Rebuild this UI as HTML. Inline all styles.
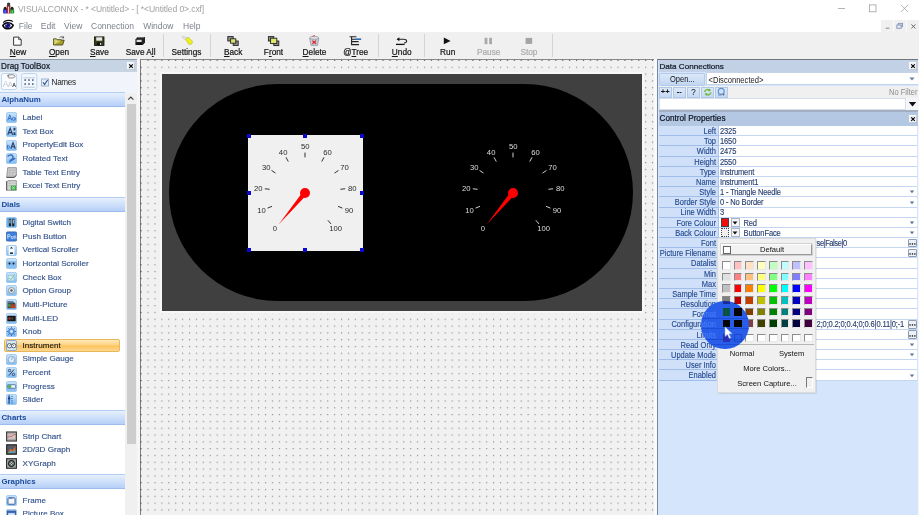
<!DOCTYPE html>
<html><head><meta charset="utf-8"><title>VISUALCONNX</title>
<style>
*{box-sizing:border-box;margin:0;padding:0}
html{width:919px;height:515px;overflow:hidden;background:#fff}
body{width:919px;height:515px;overflow:visible;background:#fff;filter:blur(0.4px);will-change:transform}
body{position:relative;font-family:"Liberation Sans",sans-serif;font-size:8.3px;color:#222;-webkit-font-smoothing:antialiased}
.a{position:absolute;white-space:nowrap}
.t{position:absolute;white-space:nowrap;line-height:10px;height:10px}
.tb{position:absolute;top:47.5px;height:10px;line-height:10px;font-size:8.25px;color:#151515;-webkit-text-stroke-width:0.2px;text-align:center;white-space:nowrap;transform:translateX(-50%)}
.tb u{text-decoration-thickness:0.6px;text-underline-offset:1px}
.sep{position:absolute;top:34px;height:23px;width:1px;background:#d4d4d4}
.hdr{position:absolute;left:-8px;width:133px;height:15px;background:linear-gradient(#e6f0fd,#b7d0f8);color:#1a4a9c;font-weight:bold;font-size:7.9px;line-height:14.2px;padding-left:9.4px;border-bottom:1px solid #9dbcee;border-top:1px solid #b4cdf3}
.it{-webkit-text-stroke-width:0.15px;position:absolute;left:22.5px;height:12px;line-height:12px;font-size:8.1px;color:#34538c;white-space:nowrap}
.ic{position:absolute;left:6px;width:11px;height:11px}
.pl{-webkit-text-stroke-width:0.12px;position:absolute;left:659px;width:58px;height:10.18px;line-height:11.6px;text-align:right;font-size:7.5px;transform:scaleY(1.1);transform-origin:100% 60%;color:#24488e;white-space:nowrap;padding-right:1px}
.pv{-webkit-text-stroke-width:0.12px;position:absolute;left:720.5px;height:10.18px;line-height:11.4px;font-size:7.55px;transform:scaleY(1.18);transform-origin:0 60%;color:#2a4070;white-space:nowrap;letter-spacing:-0.15px}
</style></head><body>
<svg width="0" height="0" style="position:absolute"><defs><linearGradient id="gb" x1="0" y1="0" x2="0" y2="1"><stop offset="0" stop-color="#cde5fb"/><stop offset="1" stop-color="#7fbcf0"/></linearGradient></defs></svg>

<div class="a" style="left:-8px;top:-8px;width:940px;height:39.5px;background:#fff"></div>
<svg class="a" style="left:2px;top:2px" width="14" height="13" viewBox="2 2 14 13">
<rect x="6.9" y="5.2" width="3.3" height="8.3" fill="#d42020"/><rect x="8.1" y="5.6" width="0.9" height="7.6" fill="#f4e8e0"/>
<circle cx="8.6" cy="4.1" r="1.7" fill="#3a3a3a"/><path d="M6.6 6.4C6.8 5 10.4 5 10.6 6.4Z" fill="#333"/>
<path d="M3.4 10C3.4 5.6 7 5.6 7 10V10.4H3.4Z" fill="#1c1c1c"/><rect x="3.1" y="9.6" width="4" height="3.9" rx="0.8" fill="#2330e0"/><rect x="4.7" y="10.4" width="0.8" height="2.4" fill="#9aa4ff"/>
<path d="M10.2 10C10.2 5.6 13.8 5.6 13.8 10V10.4H10.2Z" fill="#1c1c1c"/><rect x="10.2" y="9.6" width="4" height="3.9" rx="0.8" fill="#1f9a34"/><rect x="11.8" y="10.4" width="0.8" height="2.4" fill="#9fe0a8"/>
</svg>
<div class="t" style="left:18px;top:3.6px;font-size:8.6px;color:#a2a2a2;letter-spacing:-0.12px">VISUALCONNX - * &lt;Untitled&gt; - [ *&lt;Untitled 0&gt;.cxf]</div>
<svg class="a" style="left:830px;top:0" width="89" height="17" viewBox="0 0 89 17" fill="none" stroke="#a0a0a0" stroke-width="0.8">
<path d="M8 8.5H15"/><rect x="39.4" y="4.9" width="6.6" height="6.9"/><path d="M71 4.9L78 11.9M78 4.9L71 11.9"/></svg>
<svg class="a" style="left:2px;top:19px" width="13" height="12" viewBox="2 19 13 12">
<path d="M3.2 22.6C5 20 10.4 19.6 13 21.6" stroke="#111" stroke-width="1.1" fill="none"/>
<path d="M2.8 25.6C4.4 22.2 10.6 21.6 13.2 25.2C11.4 29.6 5 30.2 2.8 25.6Z" fill="#fff" stroke="#0a0a0a" stroke-width="1.5"/>
<circle cx="7.8" cy="25.6" r="2.7" fill="#1a1a96"/><circle cx="7.8" cy="25.6" r="1.1" fill="#05052a"/>
<path d="M6 24.2L7 25.2M8.8 26.6L9.6 27.2" stroke="#dfe4ff" stroke-width="0.8"/>
</svg>
<div class="t" style="left:18.8px;top:20.6px;font-size:8.5px;color:#7c828a">File</div>
<div class="t" style="left:40.8px;top:20.6px;font-size:8.5px;color:#7c828a">Edit</div>
<div class="t" style="left:64px;top:20.6px;font-size:8.5px;color:#7c828a">View</div>
<div class="t" style="left:91px;top:20.6px;font-size:8.5px;color:#7c828a">Connection</div>
<div class="t" style="left:143.2px;top:20.6px;font-size:8.5px;color:#7c828a">Window</div>
<div class="t" style="left:183px;top:20.6px;font-size:8.5px;color:#7c828a">Help</div>
<div class="a" style="left:881px;top:20px;width:46px;height:11.5px;background:#f0f0f0"></div>
<div class="a" style="left:892.6px;top:20px;width:1px;height:11.5px;background:#fafafa"></div>
<div class="a" style="left:906px;top:20px;width:1px;height:11.5px;background:#fafafa"></div>
<svg class="a" style="left:881px;top:20px" width="38" height="12" viewBox="0 0 38 12">
<path d="M4.6 8.2H8.4" stroke="#8a8a8a" stroke-width="1"/>
<rect x="17.2" y="3.3" width="4.4" height="3.4" fill="#cfd8ea" stroke="#7f8fae" stroke-width="0.8"/><rect x="15.8" y="5" width="4.4" height="3.3" fill="#dfe6f3" stroke="#7f8fae" stroke-width="0.8"/>
<path d="M30.4 4.4L34.4 8.4M34.4 4.4L30.4 8.4" stroke="#666" stroke-width="1"/></svg>
<div class="a" style="left:-8px;top:31.5px;width:940px;height:27.5px;background:#f0f0f0"></div>
<div class="sep" style="left:163px"></div>
<div class="sep" style="left:209.5px"></div>
<div class="sep" style="left:378px"></div>
<div class="sep" style="left:424.3px"></div>
<div class="sep" style="left:552px"></div>
<div class="tb" style="left:18px"><u>N</u>ew</div>
<div class="tb" style="left:59px"><u>O</u>pen</div>
<div class="tb" style="left:99.4px"><u>S</u>ave</div>
<div class="tb" style="left:140.6px">Save A<u>l</u>l</div>
<div class="tb" style="left:186.5px">Settings</div>
<div class="tb" style="left:233.2px"><u>B</u>ack</div>
<div class="tb" style="left:273.5px">F<u>r</u>ont</div>
<div class="tb" style="left:314.5px"><u>D</u>elete</div>
<div class="tb" style="left:355.7px">@<u>T</u>ree</div>
<div class="tb" style="left:401.7px"><u>U</u>ndo</div>
<div class="tb" style="left:447.7px">Run</div>
<div class="tb" style="left:488.7px;color:#ababab">Pause</div>
<div class="tb" style="left:528.9px;color:#ababab">Stop</div>
<svg class="a" style="left:0;top:32.5px" width="560" height="16" viewBox="0 32 560 16">
<!-- new -->
<path d="M13.6 36.1H18.6L21.2 38.6V44.2H13.6Z" fill="#fff" stroke="#222" stroke-width="0.9"/><path d="M18.6 36.1V38.6H21.2" fill="none" stroke="#222" stroke-width="0.7"/>
<!-- open -->
<path d="M53.6 44L55 39.2H64.2L62.6 44Z" fill="#a5a02a" stroke="#3a3a10" stroke-width="0.8"/><path d="M53.6 44V37.8H56.4L57.2 38.8H61.6V39.2" fill="#d8d36a" stroke="#3a3a10" stroke-width="0.8"/><path d="M59.6 36.6C60.8 35.5 62.4 35.5 63.4 36.6M63.6 35.4V36.9H62.1" fill="none" stroke="#222" stroke-width="0.7"/>
<!-- save -->
<rect x="94.4" y="35.9" width="9.6" height="8.6" fill="#3a3d12" stroke="#111" stroke-width="0.8"/><rect x="96.2" y="36.3" width="6" height="3.4" fill="#e8e8e8"/><rect x="96.8" y="41.4" width="4.8" height="3" fill="#111"/><rect x="100" y="41.9" width="1.2" height="2" fill="#ddd"/>
<!-- save all -->
<path d="M135.4 38.4L137.6 36H145V41.6L142.8 44H135.4Z" fill="#222"/><rect x="136.6" y="38.8" width="5" height="2.2" fill="#ddd"/><path d="M137.8 36.6H144.2" stroke="#999" stroke-width="0.7"/><path d="M136.6 43H142" stroke="#000" stroke-width="1.4"/>
<!-- settings (highlighter) -->
<path d="M185 37.4L188.4 36.2L192.6 40.4L191.8 43L188.8 43.4Z" fill="#eef01e" stroke="#b9b930" stroke-width="0.6"/><path d="M182 36L184.2 35.4L186.6 37.2L185 38.6Z" fill="#e6e6e6" stroke="#bdbdbd" stroke-width="0.6"/>
<!-- back -->
<rect x="227.8" y="35.6" width="5.4" height="4.4" fill="#8f8f8f" stroke="#222" stroke-width="0.9"/><rect x="233.2" y="40" width="5" height="4.4" fill="#8f8f8f" stroke="#222" stroke-width="0.9"/><rect x="230.6" y="37.8" width="5.2" height="4.4" fill="#d9e36a" stroke="#222" stroke-width="0.9"/>
<!-- front -->
<rect x="268.4" y="35.6" width="5.4" height="4.4" fill="#8f8f8f" stroke="#222" stroke-width="0.9"/><rect x="273.8" y="40" width="5" height="4.6" fill="#8f8f8f" stroke="#222" stroke-width="0.9"/><rect x="270.6" y="37.2" width="6.2" height="5.4" fill="#dfe86a" stroke="#222" stroke-width="0.9"/>
<!-- delete -->
<path d="M309.6 37.4L318.8 37L317.6 44.4H311Z" fill="#c9ccd4" stroke="#8a8e98" stroke-width="0.7"/><ellipse cx="314.2" cy="36.8" rx="4.6" ry="1.4" fill="#e4e6ea" stroke="#7d818b" stroke-width="0.6"/><path d="M312.4 39.6L316 42.8M316 39.6L312.4 42.8" stroke="#e0202a" stroke-width="1.2"/><path d="M312.5 35.2L315 34.6" stroke="#c33" stroke-width="0.8"/>
<!-- tree -->
<path d="M349.6 35.8H356.4M351.6 35.8V44.2M351.6 38.2H361M351.6 40.6H358.6M351.6 43.6H359" stroke="#222" stroke-width="1.1" fill="none"/><path d="M355 38.2H361.2" stroke="#2d6fd0" stroke-width="1.2"/>
<!-- undo -->
<path d="M396 43.4H404.6" stroke="#111" stroke-width="1.3"/><path d="M397.4 38.2H403.4C407.6 38.2 407.6 42 404 42" fill="none" stroke="#222" stroke-width="1.1"/><path d="M399.4 36.2L396.6 38.2L399.4 40.2Z" fill="#111"/>
<!-- run / pause / stop -->
<path d="M443.8 36.5L450.6 39.9L443.8 43.3Z" fill="#111"/>
<rect x="484.6" y="36.8" width="2.8" height="6.4" fill="#a9a9a9"/><rect x="489.2" y="36.8" width="2.8" height="6.4" fill="#a9a9a9"/>
<rect x="525.6" y="36.9" width="6.6" height="6" fill="#a4a4a4"/>
</svg>
<div class="a" style="left:-8px;top:59px;width:144.5px;height:470px;background:#fff"></div>
<div class="a" style="left:136.5px;top:59px;width:4px;height:470px;background:#f6f6f6"></div>
<div class="a" style="left:-8px;top:59px;width:144.5px;height:13px;background:#c6d4e4;border-top:1px solid #8f9aa8"></div>
<div class="t" style="left:1px;top:62.1px;font-size:8.2px;color:#101820;-webkit-text-stroke-width:0.2px">Drag ToolBox</div>
<svg class="a" style="left:126.5px;top:61.6px" width="8" height="8" viewBox="0 0 8 8"><rect x="0" y="0" width="8" height="8" fill="#eef2f6"/><path d="M0 8V0H8" fill="none" stroke="#fff" stroke-width="1"/><path d="M8 0V8H0" fill="none" stroke="#8793a3" stroke-width="0.8"/><path d="M2.2 2.3L5.8 5.9M5.8 2.3L2.2 5.9" stroke="#000" stroke-width="1.1"/></svg>
<div class="a" style="left:-8px;top:72px;width:144.5px;height:20.6px;background:#f1f5fb"></div>
<svg class="a" style="left:0;top:72px" width="80" height="20" viewBox="0 72 80 20">
<rect x="1.4" y="73.6" width="15.2" height="16" rx="2" fill="#fafcff" stroke="#b9d4ee" stroke-width="1"/>
<rect x="21.6" y="73.6" width="15.2" height="16" rx="2" fill="#f2f8ff" stroke="#b9d4ee" stroke-width="1"/>
<path d="M7.6 76C8 74.4 14.6 74.2 15 76.2C15.4 78.2 9 78.4 7.8 77.4" fill="none" stroke="#555" stroke-width="0.7"/><path d="M8.8 74.6L7.4 76L9.2 76.6" fill="none" stroke="#444" stroke-width="0.6"/>
<path d="M23.4 77.8H35M23.4 87.2H35" stroke="#9ab" stroke-width="0.6"/>
<g fill="#2a3d66"><rect x="24.4" y="79.4" width="1.6" height="1.3"/><rect x="28.2" y="79.4" width="1.6" height="1.3"/><rect x="32" y="79.4" width="1.6" height="1.3"/><rect x="24.4" y="83.4" width="1.6" height="1.3"/><rect x="28.2" y="83.4" width="1.6" height="1.3"/><rect x="32" y="83.4" width="1.6" height="1.3"/></g>
<rect x="41.6" y="79" width="7" height="7" fill="#e6eefa" stroke="#8aa2c8" stroke-width="0.8"/><path d="M43 82.2L44.6 84.6L47.6 80" fill="none" stroke="#2f4f8f" stroke-width="1.1"/>
</svg>
<div class="t" style="left:2.8px;top:78.6px;font-size:8.8px;color:#c6c9ce;letter-spacing:-0.9px">A<span style="font-size:7.6px">A</span><span style="font-size:5.2px;color:#2a3348;font-weight:bold;letter-spacing:0">&#8202;A</span></div>
<div class="t" style="left:51.6px;top:78.3px;font-size:8.2px;letter-spacing:-0.35px;color:#1c1c1c">Names</div>
<div class="a" style="left:125px;top:92.6px;width:11.5px;height:436px;background:#f0f0f0"></div>
<div class="a" style="left:126.6px;top:104px;width:9.6px;height:340px;background:#cdcdcd"></div>
<svg class="a" style="left:125px;top:93px" width="12" height="11" viewBox="0 0 12 11"><path d="M3.2 6.6L5.8 4L8.4 6.6" fill="none" stroke="#444" stroke-width="1.2"/></svg>
<div class="hdr" style="top:92.3px">AlphaNum</div>
<svg class="ic" style="top:112.3px" viewBox="0 0 10 10"><rect x="0.4" y="0.4" width="9.2" height="9.2" rx="1.4" fill="url(#gb)" stroke="#8fc0ee" stroke-width="0.7"/><path d="M1.6 7.6L3.4 2.6L5.2 7.6M2.3 6H4.5" fill="none" stroke="#3b6fc4" stroke-width="0.9"/><circle cx="7" cy="6.3" r="1.3" fill="none" stroke="#3b6fc4" stroke-width="0.8"/><path d="M8.3 5V7.6" stroke="#3b6fc4" stroke-width="0.8"/></svg>
<div class="it" style="top:112.2px">Label</div>
<svg class="ic" style="top:125.9px" viewBox="0 0 10 10"><rect x="0.4" y="0.4" width="9.2" height="9.2" rx="1.4" fill="url(#gb)" stroke="#8fc0ee" stroke-width="0.7"/><path d="M1.6 8L3.8 2L6 8M2.5 6H5.1" fill="none" stroke="#2a3f66" stroke-width="1"/><rect x="6.8" y="1.6" width="1.8" height="2.4" fill="#2a3f66"/><rect x="6.8" y="5.8" width="1.8" height="2.4" fill="#2a3f66"/></svg>
<div class="it" style="top:125.8px">Text Box</div>
<svg class="ic" style="top:139.5px" viewBox="0 0 10 10"><rect x="0.4" y="0.4" width="9.2" height="9.2" rx="1.4" fill="url(#gb)" stroke="#8fc0ee" stroke-width="0.7"/><path d="M4.4 8L6.4 2.4L8.4 8M5.1 6.2H7.7" fill="none" stroke="#2a3f66" stroke-width="1"/><path d="M1.4 4.4V8M1.4 5.6C2.4 4.6 3.6 5.4 3.2 6.6C2.8 7.8 1.8 7.6 1.4 7.2" fill="none" stroke="#3b6fc4" stroke-width="0.8"/></svg>
<div class="it" style="top:139.4px">PropertyEdit Box</div>
<svg class="ic" style="top:153.1px" viewBox="0 0 10 10"><rect x="0.4" y="0.4" width="9.2" height="9.2" rx="1.4" fill="url(#gb)" stroke="#8fc0ee" stroke-width="0.7"/><path d="M1.4 3.2C3 1 6.4 1.4 6.4 4C6.4 6 3.6 5.6 3.6 7.6L8.4 4.6" fill="none" stroke="#3b6fc4" stroke-width="1.3"/></svg>
<div class="it" style="top:153.0px">Rotated Text</div>
<svg class="ic" style="top:166.7px" viewBox="0 0 10 10"><path d="M1.6 0.6H9.4V7.6L7.4 9.4H0.6Z" fill="#d2d2d2" stroke="#808080" stroke-width="0.7"/><path d="M9.4 7.6L7.4 9.4H0.6" fill="none" stroke="#444" stroke-width="0.9"/><path d="M1.4 3H9.2M1.2 5.2H9.2M1 7.4H8M3.8 0.8L3.2 9.2M6.6 0.8L6 9.2" stroke="#aaa" stroke-width="0.5"/></svg>
<div class="it" style="top:166.6px">Table Text Entry</div>
<svg class="ic" style="top:180.3px" viewBox="0 0 10 10"><path d="M1.6 0.6H9.4V9.4H0.6V1.6Z" fill="#d6d6d6" stroke="#808080" stroke-width="0.7"/><path d="M0.6 1V9.4" stroke="#555" stroke-width="0.9"/><path d="M1 3H9M1 5.2H9M3.6 0.8V9.2" stroke="#b5b5b5" stroke-width="0.5"/><rect x="4.4" y="5" width="4.8" height="4.2" fill="#34a844"/><path d="M5.6 6L8 8.2M8 6L5.6 8.2" stroke="#e8ffe8" stroke-width="0.7"/></svg>
<div class="it" style="top:180.2px">Excel Text Entry</div>
<div class="hdr" style="top:196.5px">Dials</div>
<svg class="ic" style="top:217.3px" viewBox="0 0 10 10"><rect x="0.4" y="0.4" width="9.2" height="9.2" rx="1.4" fill="#6db2ec" stroke="#8fc0ee" stroke-width="0.7"/><rect x="2.6" y="1.6" width="2" height="6.8" fill="#222"/><rect x="5.6" y="1.6" width="2" height="6.8" fill="#222"/><rect x="3.2" y="2.4" width="0.8" height="3.4" fill="#e8f0ff"/><rect x="6.2" y="2.4" width="0.8" height="3.4" fill="#e8f0ff"/></svg>
<div class="it" style="top:217.2px">Digital Switch</div>
<svg class="ic" style="top:230.9px" viewBox="0 0 10 10"><rect x="0.4" y="0.8" width="9.2" height="8.4" rx="1" fill="#3f7fdc" stroke="#2c5cac" stroke-width="0.7"/><path d="M1.6 7V3.2H2.8C4 3.2 4 5.2 2.8 5.2H1.6M4.8 4.6V6.2C4.8 7.2 6.4 7.2 6.4 6.2V4.6M7.4 7V4.8C8.4 4.2 9 4.6 9 5.4V7" fill="none" stroke="#e8f1ff" stroke-width="0.7"/></svg>
<div class="it" style="top:230.8px">Push Button</div>
<svg class="ic" style="top:244.5px" viewBox="0 0 10 10"><rect x="0.4" y="0.4" width="9.2" height="9.2" rx="1.4" fill="url(#gb)" stroke="#8fc0ee" stroke-width="0.7"/><rect x="2.4" y="1" width="5.2" height="8" fill="#f4f9fe"/><path d="M3.6 3.2L5 1.6L6.4 3.2Z" fill="#222"/><path d="M3.6 6.8L5 8.4L6.4 6.8Z" fill="#222"/><rect x="3.6" y="7" width="2.8" height="1.2" fill="#333"/></svg>
<div class="it" style="top:244.4px">Vertical Scroller</div>
<svg class="ic" style="top:258.2px" viewBox="0 0 10 10"><rect x="0.4" y="0.4" width="9.2" height="9.2" rx="1.4" fill="url(#gb)" stroke="#8fc0ee" stroke-width="0.7"/><rect x="0.8" y="3" width="8.4" height="4" fill="#7db6ec"/><path d="M3.6 3.8L2 5L3.6 6.2Z" fill="#1a1a2a"/><path d="M6.4 3.8L8 5L6.4 6.2Z" fill="#1a1a2a"/><rect x="2.8" y="4.4" width="1.2" height="1.2" fill="#1a1a2a"/><rect x="6" y="4.4" width="1.2" height="1.2" fill="#1a1a2a"/></svg>
<div class="it" style="top:258.1px">Horizontal Scroller</div>
<svg class="ic" style="top:271.8px" viewBox="0 0 10 10"><rect x="0.4" y="0.4" width="9.2" height="9.2" rx="1.4" fill="url(#gb)" stroke="#8fc0ee" stroke-width="0.7"/><rect x="2" y="3.2" width="5.2" height="4.8" fill="#d4ecec" stroke="#8fbfd8" stroke-width="0.6"/><path d="M3 5.4L4.4 7L7.8 2.2" fill="none" stroke="#7fc0a8" stroke-width="0.9"/></svg>
<div class="it" style="top:271.7px">Check Box</div>
<svg class="ic" style="top:285.4px" viewBox="0 0 10 10"><rect x="0.4" y="0.4" width="9.2" height="9.2" rx="1.4" fill="url(#gb)" stroke="#8fc0ee" stroke-width="0.7"/><circle cx="5" cy="5" r="2.7" fill="#e4edf6" stroke="#8a8f98" stroke-width="0.8"/><circle cx="5" cy="5" r="1.1" fill="#555"/></svg>
<div class="it" style="top:285.3px">Option Group</div>
<svg class="ic" style="top:299.0px" viewBox="0 0 10 10"><rect x="0.4" y="0.4" width="9.2" height="9.2" rx="1.4" fill="url(#gb)" stroke="#8fc0ee" stroke-width="0.7"/><path d="M1.4 2H6L8.6 4.2V8.4H1.4Z" fill="#3a4a3a"/><path d="M1.6 2.2H5.8L7.2 3.4H1.6Z" fill="#6a8ad0"/><rect x="4.2" y="5" width="4.2" height="3.2" fill="#c23a2a"/><rect x="1.8" y="4.4" width="2.4" height="2.8" fill="#4f8a3a"/></svg>
<div class="it" style="top:298.9px">Multi-Picture</div>
<svg class="ic" style="top:312.6px" viewBox="0 0 10 10"><rect x="0.4" y="0.4" width="9.2" height="9.2" rx="1.4" fill="url(#gb)" stroke="#8fc0ee" stroke-width="0.7"/><rect x="1.2" y="2.4" width="7.6" height="5.2" rx="0.6" fill="#161616"/><rect x="2.2" y="4" width="2" height="2" fill="#b03a2a"/><rect x="4.8" y="4" width="1.8" height="2" fill="#444"/></svg>
<div class="it" style="top:312.5px">Multi-LED</div>
<svg class="ic" style="top:326.3px" viewBox="0 0 10 10"><rect x="0.4" y="0.4" width="9.2" height="9.2" rx="1.4" fill="url(#gb)" stroke="#8fc0ee" stroke-width="0.7"/><circle cx="5" cy="5" r="2.7" fill="#5a9be6" stroke="#3a70c0" stroke-width="0.6"/><circle cx="5" cy="5" r="1.3" fill="#e4f0ff"/><path d="M5 0.9V1.9M5 8.1V9.1M0.9 5H1.9M8.1 5H9.1M2 2L2.7 2.7M8 2L7.3 2.7M2 8L2.7 7.3M8 8L7.3 7.3" stroke="#2a55a8" stroke-width="0.7"/></svg>
<div class="it" style="top:326.2px">Knob</div>
<div class="a" style="left:3.5px;top:338.6px;width:116px;height:13.4px;border:1px solid #e9b658;border-radius:2px;background:linear-gradient(#fee9b8,#fdd384 45%,#fcc45c 55%,#fdd892)"></div>
<svg class="ic" style="top:339.9px" viewBox="0 0 10 10"><rect x="0.4" y="0.4" width="9.2" height="9.2" rx="1.2" fill="#d8e6ee" stroke="#7f9fc4" stroke-width="0.8"/><circle cx="3.2" cy="5.2" r="2" fill="#f4f8fb" stroke="#345" stroke-width="0.7"/><circle cx="7" cy="5.2" r="2" fill="#f4f8fb" stroke="#345" stroke-width="0.7"/><path d="M3.2 5.2L4.2 4M7 5.2L6.2 4" stroke="#223" stroke-width="0.6"/></svg>
<div class="it" style="top:339.8px;color:#1a1a1a">Instrument</div>
<svg class="ic" style="top:353.5px" viewBox="0 0 10 10"><rect x="0.4" y="0.4" width="9.2" height="9.2" rx="1.4" fill="url(#gb)" stroke="#8fc0ee" stroke-width="0.7"/><circle cx="5" cy="5.2" r="3" fill="#dcecfb" stroke="#8aa4c4" stroke-width="0.8"/><path d="M5 5.2L5.8 3.2" stroke="#7a94b8" stroke-width="0.8"/></svg>
<div class="it" style="top:353.4px">Simple Gauge</div>
<svg class="ic" style="top:367.1px" viewBox="0 0 10 10"><rect x="0.4" y="0.4" width="9.2" height="9.2" rx="1.4" fill="url(#gb)" stroke="#8fc0ee" stroke-width="0.7"/><circle cx="3.2" cy="3.2" r="1.1" fill="none" stroke="#2a3f66" stroke-width="0.8"/><circle cx="6.8" cy="6.8" r="1.1" fill="none" stroke="#2a3f66" stroke-width="0.8"/><path d="M7.4 2.2L2.6 7.8" stroke="#2a3f66" stroke-width="0.9"/></svg>
<div class="it" style="top:367.0px">Percent</div>
<svg class="ic" style="top:380.7px" viewBox="0 0 10 10"><rect x="0.4" y="0.4" width="9.2" height="9.2" rx="1.4" fill="url(#gb)" stroke="#8fc0ee" stroke-width="0.7"/><rect x="1.2" y="3.4" width="7.6" height="3.2" rx="0.6" fill="#f4f8fc" stroke="#3a5f9a" stroke-width="0.7"/><rect x="1.6" y="3.8" width="3.2" height="2.4" fill="#49b050"/></svg>
<div class="it" style="top:380.6px">Progress</div>
<svg class="ic" style="top:394.4px" viewBox="0 0 10 10"><rect x="0.4" y="0.4" width="9.2" height="9.2" rx="1.4" fill="url(#gb)" stroke="#8fc0ee" stroke-width="0.7"/><path d="M2.8 1.2V8.8" stroke="#1a3a8a" stroke-width="1.1"/><path d="M4.6 2.2H6.4M4.6 4.2H6.4M4.6 6.2H6.4M4.6 8.2H6.4" stroke="#3b6fc4" stroke-width="0.7"/><rect x="1.8" y="3.2" width="2.2" height="1.6" fill="#1a3a8a"/></svg>
<div class="it" style="top:394.3px">Slider</div>
<div class="hdr" style="top:410.4px">Charts</div>
<svg class="ic" style="top:430.9px" viewBox="0 0 10 10"><rect x="0.6" y="0.9" width="8.8" height="8.2" fill="#cfc4c4" stroke="#2e2e2e" stroke-width="1"/><path d="M1.4 6.4C3 3 4.4 6.4 6 4.4S8 3.4 8.8 3.6" fill="none" stroke="#c44" stroke-width="0.7"/><path d="M1.2 7.6H8.8M1.2 2.6H8.8" stroke="#8a8080" stroke-width="0.5"/></svg>
<div class="it" style="top:430.8px">Strip Chart</div>
<svg class="ic" style="top:444.4px" viewBox="0 0 10 10"><rect x="0.6" y="0.7" width="8.8" height="8.6" fill="#555c66" stroke="#222" stroke-width="1"/><path d="M1.6 8L4 4.4L6 6L8.6 1.8V8Z" fill="#e0702a"/><path d="M1.6 8L4.2 6.4L6.4 7L8.6 5.2V8Z" fill="#3fa4d8"/><path d="M1.6 8L3 7.2L4.4 8Z" fill="#58b848"/></svg>
<div class="it" style="top:444.3px">2D/3D Graph</div>
<svg class="ic" style="top:457.9px" viewBox="0 0 10 10"><rect x="0.6" y="0.7" width="8.8" height="8.6" fill="#b9c6bd" stroke="#262626" stroke-width="1.1"/><circle cx="5" cy="5" r="2.6" fill="none" stroke="#111" stroke-width="1"/><path d="M2.4 2.6L7.6 7.4M7.6 2.6L2.4 7.4" stroke="#333" stroke-width="0.6"/></svg>
<div class="it" style="top:457.8px">XYGraph</div>
<div class="hdr" style="top:474.4px">Graphics</div>
<svg class="ic" style="top:495.1px" viewBox="0 0 10 10"><rect x="0.4" y="0.4" width="9.2" height="9.2" rx="1.4" fill="url(#gb)" stroke="#8fc0ee" stroke-width="0.7"/><rect x="1.8" y="2.6" width="6.4" height="5.8" rx="0.6" fill="#f2f7fd" stroke="#3f5f94" stroke-width="0.9"/><rect x="2.8" y="1.8" width="3" height="1.6" fill="#5a7fc0"/></svg>
<div class="it" style="top:495.0px">Frame</div>
<svg class="ic" style="top:508.5px" viewBox="0 0 10 10"><rect x="0.4" y="0.4" width="9.2" height="9.2" rx="1.4" fill="url(#gb)" stroke="#8fc0ee" stroke-width="0.7"/><rect x="1.2" y="1.8" width="7.6" height="6.4" fill="#3f6fc0" stroke="#2a4f90" stroke-width="0.7"/><rect x="2" y="3.8" width="6" height="2.4" fill="#dfe9f8"/></svg>
<div class="it" style="top:508.4px">Picture Box</div><div class="a" style="left:140px;top:59px;width:514px;height:470px;background:#f1f1f1;border-left:1px solid #7d7d7d;border-top:1px solid #8a8a8a"></div>
<div class="a" style="left:654px;top:59px;width:3px;height:470px;background:#fafafa"></div>
<svg class="a" style="left:140px;top:59px" width="514" height="456" viewBox="140 59 514 456">
<defs><pattern id="dots" x="144.55" y="63.8" width="6.911" height="6.81" patternUnits="userSpaceOnUse"><rect x="2.9" y="2.9" width="1.2" height="1.2" fill="#8e8e8e"/></pattern></defs>
<rect x="146" y="65" width="508" height="450" fill="url(#dots)"/>
<rect x="140" y="59" width="514" height="2" fill="url(#dots)" transform="translate(0,-6.9)"/>
</svg>
<svg class="a" style="left:140px;top:59px" width="514" height="456" viewBox="140 59 514 456">
<defs><pattern id="dtop" x="144.55" y="59" width="6.911" height="3" patternUnits="userSpaceOnUse"><rect x="2.9" y="0.6" width="1.2" height="1.4" fill="#6a6a6a"/></pattern>
<pattern id="dleft" x="140" y="63.8" width="3" height="6.81" patternUnits="userSpaceOnUse"><rect x="0.2" y="2.9" width="1.4" height="1.2" fill="#555"/></pattern></defs>
<rect x="146" y="59" width="508" height="3" fill="url(#dtop)"/>
<rect x="140" y="65" width="3" height="450" fill="url(#dleft)"/>
</svg>
<div class="a" style="left:159.6px;top:71.8px;width:484px;height:241.6px;background:#f7f7f7"></div>
<div class="a" style="left:162px;top:74px;width:479.6px;height:237.4px;background:#404040"></div>
<div class="a" style="left:168.5px;top:83.8px;width:464.6px;height:217.4px;background:#000;border-radius:108.7px"></div>
<div class="a" style="left:247.8px;top:135px;width:115.2px;height:116px;background:#f0f0f0"></div>
<svg class="a" style="left:245.3px;top:132.5px;overflow:visible" width="120" height="120" viewBox="245.3 132.5 120 120" font-family="Liberation Sans, sans-serif" font-size="7.7" text-anchor="middle"><text x="275.26" y="230.57" fill="#2a2a2a">0</text><path d="M272.29 205.84L267.84 207.63" stroke="#333" stroke-width="1"/><text x="261.84" y="212.44" fill="#2a2a2a">10</text><path d="M269.90 188.78L265.12 188.28" stroke="#333" stroke-width="1"/><text x="258.66" y="190.26" fill="#2a2a2a">20</text><path d="M275.79 172.59L271.81 169.91" stroke="#333" stroke-width="1"/><text x="266.47" y="169.21" fill="#2a2a2a">30</text><path d="M288.59 161.07L286.33 156.83" stroke="#333" stroke-width="1"/><text x="283.44" y="154.22" fill="#2a2a2a">40</text><path d="M305.30 156.90L305.30 152.10" stroke="#333" stroke-width="1"/><text x="305.60" y="148.80" fill="#2a2a2a">50</text><path d="M322.01 161.07L324.27 156.83" stroke="#333" stroke-width="1"/><text x="327.76" y="154.22" fill="#2a2a2a">60</text><path d="M334.81 172.59L338.79 169.91" stroke="#333" stroke-width="1"/><text x="344.73" y="169.21" fill="#2a2a2a">70</text><path d="M340.70 188.78L345.48 188.28" stroke="#333" stroke-width="1"/><text x="352.54" y="190.26" fill="#2a2a2a">80</text><path d="M338.31 205.84L342.76 207.63" stroke="#333" stroke-width="1"/><text x="349.36" y="212.44" fill="#2a2a2a">90</text><path d="M328.18 219.77L331.27 223.45" stroke="#333" stroke-width="1"/><text x="335.94" y="230.57" fill="#2a2a2a">100</text><path d="M303.38 190.89L278.95 223.91L307.22 194.11Z" fill="#ff0000"/><circle cx="305.3" cy="192.5" r="5" fill="#ff0000"/></svg>
<svg class="a" style="left:452.6px;top:132.5px;overflow:visible" width="120" height="120" viewBox="452.6 132.5 120 120" font-family="Liberation Sans, sans-serif" font-size="7.7" text-anchor="middle"><text x="482.56" y="230.57" fill="#dcdcdc">0</text><path d="M479.59 205.84L475.14 207.63" stroke="#cfcfcf" stroke-width="1"/><text x="469.14" y="212.44" fill="#dcdcdc">10</text><path d="M477.20 188.78L472.42 188.28" stroke="#cfcfcf" stroke-width="1"/><text x="465.96" y="190.26" fill="#dcdcdc">20</text><path d="M483.09 172.59L479.11 169.91" stroke="#cfcfcf" stroke-width="1"/><text x="473.77" y="169.21" fill="#dcdcdc">30</text><path d="M495.89 161.07L493.63 156.83" stroke="#cfcfcf" stroke-width="1"/><text x="490.74" y="154.22" fill="#dcdcdc">40</text><path d="M512.60 156.90L512.60 152.10" stroke="#cfcfcf" stroke-width="1"/><text x="512.90" y="148.80" fill="#dcdcdc">50</text><path d="M529.31 161.07L531.57 156.83" stroke="#cfcfcf" stroke-width="1"/><text x="535.06" y="154.22" fill="#dcdcdc">60</text><path d="M542.11 172.59L546.09 169.91" stroke="#cfcfcf" stroke-width="1"/><text x="552.03" y="169.21" fill="#dcdcdc">70</text><path d="M548.00 188.78L552.78 188.28" stroke="#cfcfcf" stroke-width="1"/><text x="559.84" y="190.26" fill="#dcdcdc">80</text><path d="M545.61 205.84L550.06 207.63" stroke="#cfcfcf" stroke-width="1"/><text x="556.66" y="212.44" fill="#dcdcdc">90</text><path d="M535.48 219.77L538.57 223.45" stroke="#cfcfcf" stroke-width="1"/><text x="543.24" y="230.57" fill="#dcdcdc">100</text><path d="M510.68 190.89L486.25 223.91L514.52 194.11Z" fill="#ff0000"/><circle cx="512.6" cy="192.5" r="5" fill="#ff0000"/></svg>
<div class="a" style="left:246.8px;top:133.7px;width:4px;height:4px;background:#0a0ac8"></div>
<div class="a" style="left:246.8px;top:190.9px;width:4px;height:4px;background:#0a0ac8"></div>
<div class="a" style="left:246.8px;top:248.1px;width:4px;height:4px;background:#0a0ac8"></div>
<div class="a" style="left:303.3px;top:133.7px;width:4px;height:4px;background:#0a0ac8"></div>
<div class="a" style="left:303.3px;top:248.1px;width:4px;height:4px;background:#0a0ac8"></div>
<div class="a" style="left:359.9px;top:133.7px;width:4px;height:4px;background:#0a0ac8"></div>
<div class="a" style="left:359.9px;top:190.9px;width:4px;height:4px;background:#0a0ac8"></div>
<div class="a" style="left:359.9px;top:248.1px;width:4px;height:4px;background:#0a0ac8"></div>
<div class="a" style="left:657px;top:59px;width:272px;height:470px;background:#d5e5fb;border-left:1.5px solid #7587a6;border-top:1.2px solid #70757c"></div>
<div class="a" style="left:658.5px;top:60px;width:270px;height:12px;background:#c2d1e6"></div>
<div class="t" style="left:659.5px;top:61.6px;font-size:8.1px;color:#0c1420;-webkit-text-stroke-width:0.2px">Data Connections</div>
<svg class="a" style="left:908.5px;top:62px" width="8" height="8" viewBox="0 0 8 8"><rect width="8" height="8" fill="#eef2f6"/><path d="M0 8V0H8" fill="none" stroke="#fff" stroke-width="1"/><path d="M8 0V8H0" fill="none" stroke="#8793a3" stroke-width="0.8"/><path d="M2.2 2.3L5.8 5.9M5.8 2.3L2.2 5.9" stroke="#000" stroke-width="1.1"/></svg>
<div class="a" style="left:658.5px;top:72.6px;width:46.2px;height:13.4px;background:linear-gradient(#dbe8f9,#c2d6f1);border:1px solid #b4cae8;border-radius:1px"></div>
<div class="t" style="left:670px;top:74.9px;font-size:7.5px;color:#15151f;transform:scaleY(1.15)">Open...</div>
<div class="a" style="left:705.5px;top:72.3px;width:213.5px;height:13.2px;background:#fff;border:1px solid #c5d3e6"></div>
<div class="t" style="left:708.5px;top:75.6px;font-size:7.6px;color:#222;transform:scaleY(1.15)">&lt;Disconnected&gt;</div>
<svg class="a" style="left:908px;top:76px" width="8" height="6" viewBox="0 0 8 6"><path d="M1.4 1.6L4 4.4L6.6 1.6Z" fill="#6a7f9f"/></svg>
<div class="a" style="left:658.5px;top:86px;width:270px;height:12px;background:#f0f0f0"></div>
<div class="a" style="left:658.5px;top:86.6px;width:13.4px;height:11px;background:linear-gradient(#dbe8f9,#c6d9f3);border:1px solid #b0c8e8;font-size:7.6px;line-height:8.6px;text-align:center;color:#111;font-weight:bold">++</div>
<div class="a" style="left:672.5px;top:86.6px;width:13.4px;height:11px;background:linear-gradient(#dbe8f9,#c6d9f3);border:1px solid #b0c8e8;font-size:7.6px;line-height:8.6px;text-align:center;color:#111;font-weight:bold">--</div>
<div class="a" style="left:686.6px;top:86.6px;width:13.4px;height:11px;background:linear-gradient(#dbe8f9,#c6d9f3);border:1px solid #b0c8e8;font-size:7.6px;line-height:8.6px;text-align:center;color:#111;font-weight:normal;font-size:8.6px">?</div>
<div class="a" style="left:700.6px;top:86.6px;width:13.4px;height:11px;background:linear-gradient(#dbe8f9,#c6d9f3);border:1px solid #b0c8e8;font-size:7.6px;line-height:8.6px;text-align:center;color:#111;font-weight:bold"></div>
<div class="a" style="left:714.7px;top:86.6px;width:13.4px;height:11px;background:linear-gradient(#dbe8f9,#c6d9f3);border:1px solid #b0c8e8;font-size:7.6px;line-height:8.6px;text-align:center;color:#111;font-weight:bold"></div>
<svg class="a" style="left:700px;top:86px" width="30" height="12" viewBox="700 86 30 12">
<path d="M704.6 92A3 3 0 0 1 709.6 90.4M711 92.4A3 3 0 0 1 706 94" fill="none" stroke="#7cc04a" stroke-width="1.6"/><path d="M709 88.6L711.2 90.6L708.2 91.4Z" fill="#6ab03c"/><path d="M706.6 95.8L704.4 93.8L707.4 93Z" fill="#6ab03c"/>
<circle cx="721.2" cy="91.4" r="3" fill="#cfe2fa" stroke="#5f8fd0" stroke-width="1.1"/><circle cx="723.6" cy="94.6" r="0.9" fill="#7a6a2a"/><path d="M718 95.2H721.6" stroke="#5f8fd0" stroke-width="0.8"/>
</svg>
<div class="t" style="left:880px;top:88.2px;font-size:7.5px;color:#8a8a8a;width:37.4px;text-align:right;transform:scaleY(1.12)">No Filter</div>
<div class="a" style="left:658.5px;top:98.2px;width:247px;height:11.4px;background:#fff;border:1px solid #d5dfeb"></div>
<div class="a" style="left:905.5px;top:98.2px;width:13.5px;height:11.4px;background:#f4f6f9"></div>
<svg class="a" style="left:907.5px;top:100.6px" width="9" height="7" viewBox="0 0 9 7"><path d="M0.8 1L4.5 5.6L8.2 1Z" fill="#111"/></svg>
<div class="a" style="left:658.5px;top:110.4px;width:270px;height:1.6px;background:#a3afc0"></div>
<div class="a" style="left:658.5px;top:112px;width:270px;height:13.6px;background:#b4c8e4"></div>
<div class="t" style="left:659.5px;top:114.4px;font-size:8.2px;color:#0c1420;-webkit-text-stroke-width:0.2px">Control Properties</div>
<svg class="a" style="left:908.5px;top:114.6px" width="8" height="8" viewBox="0 0 8 8"><rect width="8" height="8" fill="#eef2f6"/><path d="M0 8V0H8" fill="none" stroke="#fff" stroke-width="1"/><path d="M8 0V8H0" fill="none" stroke="#8793a3" stroke-width="0.8"/><path d="M2.2 2.3L5.8 5.9M5.8 2.3L2.2 5.9" stroke="#000" stroke-width="1.1"/></svg>
<div class="a" style="left:658.5px;top:126.0px;width:60.5px;height:254.5px;background:#cfe0f8"></div>
<div class="a" style="left:718.4px;top:126.0px;width:198.6px;height:254.5px;background:#fff"></div>
<div class="a" style="left:658.5px;top:135.28px;width:60.5px;height:1px;background:#9fbdeb"></div>
<div class="a" style="left:718.4px;top:135.28px;width:198.6px;height:1px;background:#c4d6f2"></div>
<div class="pl" style="top:126.00px">Left</div>
<div class="pv" style="top:126.00px;left:720px">2325</div>
<div class="a" style="left:658.5px;top:145.46px;width:60.5px;height:1px;background:#9fbdeb"></div>
<div class="a" style="left:718.4px;top:145.46px;width:198.6px;height:1px;background:#c4d6f2"></div>
<div class="pl" style="top:136.18px">Top</div>
<div class="pv" style="top:136.18px;left:720px">1650</div>
<div class="a" style="left:658.5px;top:155.64px;width:60.5px;height:1px;background:#9fbdeb"></div>
<div class="a" style="left:718.4px;top:155.64px;width:198.6px;height:1px;background:#c4d6f2"></div>
<div class="pl" style="top:146.36px">Width</div>
<div class="pv" style="top:146.36px;left:720px">2475</div>
<div class="a" style="left:658.5px;top:165.82px;width:60.5px;height:1px;background:#9fbdeb"></div>
<div class="a" style="left:718.4px;top:165.82px;width:198.6px;height:1px;background:#c4d6f2"></div>
<div class="pl" style="top:156.54px">Height</div>
<div class="pv" style="top:156.54px;left:720px">2550</div>
<div class="a" style="left:658.5px;top:176.00px;width:60.5px;height:1px;background:#9fbdeb"></div>
<div class="a" style="left:718.4px;top:176.00px;width:198.6px;height:1px;background:#c4d6f2"></div>
<div class="pl" style="top:166.72px">Type</div>
<div class="pv" style="top:166.72px;left:720px">Instrument</div>
<div class="a" style="left:658.5px;top:186.18px;width:60.5px;height:1px;background:#9fbdeb"></div>
<div class="a" style="left:718.4px;top:186.18px;width:198.6px;height:1px;background:#c4d6f2"></div>
<div class="pl" style="top:176.90px">Name</div>
<div class="pv" style="top:176.90px;left:720px">Instrument1</div>
<div class="a" style="left:658.5px;top:196.36px;width:60.5px;height:1px;background:#9fbdeb"></div>
<div class="a" style="left:718.4px;top:196.36px;width:198.6px;height:1px;background:#c4d6f2"></div>
<div class="pl" style="top:187.08px">Style</div>
<div class="pv" style="top:187.08px;left:720px">1 - Triangle Needle</div>
<svg class="a" style="left:908.6px;top:190.48px" width="6" height="4" viewBox="0 0 6 4"><path d="M0.8 0.6L3 3.2L5.2 0.6Z" fill="#5d7397"/></svg>
<div class="a" style="left:658.5px;top:206.54px;width:60.5px;height:1px;background:#9fbdeb"></div>
<div class="a" style="left:718.4px;top:206.54px;width:198.6px;height:1px;background:#c4d6f2"></div>
<div class="pl" style="top:197.26px">Border Style</div>
<div class="pv" style="top:197.26px;left:720px">0 - No Border</div>
<svg class="a" style="left:908.6px;top:200.66px" width="6" height="4" viewBox="0 0 6 4"><path d="M0.8 0.6L3 3.2L5.2 0.6Z" fill="#5d7397"/></svg>
<div class="a" style="left:658.5px;top:216.72px;width:60.5px;height:1px;background:#9fbdeb"></div>
<div class="a" style="left:718.4px;top:216.72px;width:198.6px;height:1px;background:#c4d6f2"></div>
<div class="pl" style="top:207.44px">Line Width</div>
<div class="pv" style="top:207.44px;left:720px">3</div>
<div class="a" style="left:658.5px;top:226.90px;width:60.5px;height:1px;background:#9fbdeb"></div>
<div class="a" style="left:718.4px;top:226.90px;width:198.6px;height:1px;background:#c4d6f2"></div>
<div class="pl" style="top:217.62px">Fore Colour</div>
<div class="pv" style="top:217.62px;left:743.5px">Red</div>
<svg class="a" style="left:908.6px;top:221.02px" width="6" height="4" viewBox="0 0 6 4"><path d="M0.8 0.6L3 3.2L5.2 0.6Z" fill="#5d7397"/></svg>
<div class="a" style="left:658.5px;top:237.08px;width:60.5px;height:1px;background:#9fbdeb"></div>
<div class="a" style="left:718.4px;top:237.08px;width:198.6px;height:1px;background:#c4d6f2"></div>
<div class="pl" style="top:227.80px">Back Colour</div>
<div class="pv" style="top:227.80px;left:743.5px">ButtonFace</div>
<svg class="a" style="left:908.6px;top:231.20px" width="6" height="4" viewBox="0 0 6 4"><path d="M0.8 0.6L3 3.2L5.2 0.6Z" fill="#5d7397"/></svg>
<div class="a" style="left:658.5px;top:247.26px;width:60.5px;height:1px;background:#9fbdeb"></div>
<div class="a" style="left:718.4px;top:247.26px;width:198.6px;height:1px;background:#c4d6f2"></div>
<div class="pl" style="top:237.98px">Font</div>
<div class="a" style="left:907.5px;top:238.58px;width:9.5px;height:8.6px;background:#eef1f6;border:0.8px solid #8f9db3;border-radius:1px"></div>
<svg class="a" style="left:909px;top:242.98px" width="7" height="2" viewBox="0 0 7 2"><rect x="0.4" y="0.3" width="1.3" height="1.3" fill="#000"/><rect x="2.8" y="0.3" width="1.3" height="1.3" fill="#000"/><rect x="5.2" y="0.3" width="1.3" height="1.3" fill="#000"/></svg>
<div class="a" style="left:658.5px;top:257.44px;width:60.5px;height:1px;background:#9fbdeb"></div>
<div class="a" style="left:718.4px;top:257.44px;width:198.6px;height:1px;background:#c4d6f2"></div>
<div class="pl" style="top:248.16px">Picture Filename</div>
<div class="a" style="left:907.5px;top:248.76px;width:9.5px;height:8.6px;background:#eef1f6;border:0.8px solid #8f9db3;border-radius:1px"></div>
<svg class="a" style="left:909px;top:253.16px" width="7" height="2" viewBox="0 0 7 2"><rect x="0.4" y="0.3" width="1.3" height="1.3" fill="#000"/><rect x="2.8" y="0.3" width="1.3" height="1.3" fill="#000"/><rect x="5.2" y="0.3" width="1.3" height="1.3" fill="#000"/></svg>
<div class="a" style="left:658.5px;top:267.62px;width:60.5px;height:1px;background:#9fbdeb"></div>
<div class="a" style="left:718.4px;top:267.62px;width:198.6px;height:1px;background:#c4d6f2"></div>
<div class="pl" style="top:258.34px">Datalist</div>
<div class="a" style="left:658.5px;top:277.80px;width:60.5px;height:1px;background:#9fbdeb"></div>
<div class="a" style="left:718.4px;top:277.80px;width:198.6px;height:1px;background:#c4d6f2"></div>
<div class="pl" style="top:268.52px">Min</div>
<div class="a" style="left:658.5px;top:287.98px;width:60.5px;height:1px;background:#9fbdeb"></div>
<div class="a" style="left:718.4px;top:287.98px;width:198.6px;height:1px;background:#c4d6f2"></div>
<div class="pl" style="top:278.70px">Max</div>
<div class="a" style="left:658.5px;top:298.16px;width:60.5px;height:1px;background:#9fbdeb"></div>
<div class="a" style="left:718.4px;top:298.16px;width:198.6px;height:1px;background:#c4d6f2"></div>
<div class="pl" style="top:288.88px">Sample Time</div>
<div class="a" style="left:658.5px;top:308.34px;width:60.5px;height:1px;background:#9fbdeb"></div>
<div class="a" style="left:718.4px;top:308.34px;width:198.6px;height:1px;background:#c4d6f2"></div>
<div class="pl" style="top:299.06px">Resolution</div>
<div class="a" style="left:658.5px;top:318.52px;width:60.5px;height:1px;background:#9fbdeb"></div>
<div class="a" style="left:718.4px;top:318.52px;width:198.6px;height:1px;background:#c4d6f2"></div>
<div class="pl" style="top:309.24px">Format</div>
<div class="a" style="left:658.5px;top:328.70px;width:60.5px;height:1px;background:#9fbdeb"></div>
<div class="a" style="left:718.4px;top:328.70px;width:198.6px;height:1px;background:#c4d6f2"></div>
<div class="pl" style="top:319.42px">Configuration</div>
<div class="a" style="left:907.5px;top:320.02px;width:9.5px;height:8.6px;background:#eef1f6;border:0.8px solid #8f9db3;border-radius:1px"></div>
<svg class="a" style="left:909px;top:324.42px" width="7" height="2" viewBox="0 0 7 2"><rect x="0.4" y="0.3" width="1.3" height="1.3" fill="#000"/><rect x="2.8" y="0.3" width="1.3" height="1.3" fill="#000"/><rect x="5.2" y="0.3" width="1.3" height="1.3" fill="#000"/></svg>
<div class="a" style="left:658.5px;top:338.88px;width:60.5px;height:1px;background:#9fbdeb"></div>
<div class="a" style="left:718.4px;top:338.88px;width:198.6px;height:1px;background:#c4d6f2"></div>
<div class="pl" style="top:329.60px">Limits</div>
<div class="a" style="left:907.5px;top:330.20px;width:9.5px;height:8.6px;background:#eef1f6;border:0.8px solid #8f9db3;border-radius:1px"></div>
<svg class="a" style="left:909px;top:334.60px" width="7" height="2" viewBox="0 0 7 2"><rect x="0.4" y="0.3" width="1.3" height="1.3" fill="#000"/><rect x="2.8" y="0.3" width="1.3" height="1.3" fill="#000"/><rect x="5.2" y="0.3" width="1.3" height="1.3" fill="#000"/></svg>
<div class="a" style="left:658.5px;top:349.06px;width:60.5px;height:1px;background:#9fbdeb"></div>
<div class="a" style="left:718.4px;top:349.06px;width:198.6px;height:1px;background:#c4d6f2"></div>
<div class="pl" style="top:339.78px">Read Only</div>
<svg class="a" style="left:908.6px;top:343.18px" width="6" height="4" viewBox="0 0 6 4"><path d="M0.8 0.6L3 3.2L5.2 0.6Z" fill="#5d7397"/></svg>
<div class="a" style="left:658.5px;top:359.24px;width:60.5px;height:1px;background:#9fbdeb"></div>
<div class="a" style="left:718.4px;top:359.24px;width:198.6px;height:1px;background:#c4d6f2"></div>
<div class="pl" style="top:349.96px">Update Mode</div>
<svg class="a" style="left:908.6px;top:353.36px" width="6" height="4" viewBox="0 0 6 4"><path d="M0.8 0.6L3 3.2L5.2 0.6Z" fill="#5d7397"/></svg>
<div class="a" style="left:658.5px;top:369.42px;width:60.5px;height:1px;background:#9fbdeb"></div>
<div class="a" style="left:718.4px;top:369.42px;width:198.6px;height:1px;background:#c4d6f2"></div>
<div class="pl" style="top:360.14px">User Info</div>
<div class="a" style="left:658.5px;top:379.60px;width:60.5px;height:1px;background:#9fbdeb"></div>
<div class="a" style="left:718.4px;top:379.60px;width:198.6px;height:1px;background:#c4d6f2"></div>
<div class="pl" style="top:370.32px">Enabled</div>
<svg class="a" style="left:908.6px;top:373.72px" width="6" height="4" viewBox="0 0 6 4"><path d="M0.8 0.6L3 3.2L5.2 0.6Z" fill="#5d7397"/></svg>
<div class="a" style="left:718px;top:126.0px;width:1px;height:254.5px;background:#a9c3ec"></div>
<div class="a" style="left:720.6px;top:218.22px;width:8.4px;height:8.6px;background:#f20c0c;border:0.8px solid #444"></div>
<div class="a" style="left:720.6px;top:228.40px;width:8.4px;height:8.6px;background:#f0f0f0;border:0.8px dotted #444"></div>
<div class="a" style="left:730.6px;top:218.22px;width:9.4px;height:8.6px;background:#f3f5f8;border:0.8px solid #a9b4c4"></div>
<svg class="a" style="left:732.4px;top:221.22px" width="6" height="4" viewBox="0 0 6 4"><path d="M0.6 0.4L3 3.4L5.4 0.4Z" fill="#111"/></svg>
<div class="a" style="left:730.6px;top:228.40px;width:9.4px;height:8.6px;background:#f3f5f8;border:0.8px solid #a9b4c4"></div>
<svg class="a" style="left:732.4px;top:231.40px" width="6" height="4" viewBox="0 0 6 4"><path d="M0.6 0.4L3 3.4L5.4 0.4Z" fill="#111"/></svg>
<div class="pv" style="top:237.98px;left:816.6px;letter-spacing:-0.45px">se|False|0</div>
<div class="pv" style="top:319.42px;left:816.6px">2;0;0.2;0;0.4;0;0.6|0.11|0;-1</div>
<div class="a" style="left:716.8px;top:238.4px;width:99.6px;height:154.2px;background:#f0f0f0;border:1px solid #dcdcdc;box-shadow:0.5px 0.5px 1.5px rgba(0,0,0,0.25)"></div>
<div class="a" style="left:721px;top:244.4px;width:91.4px;height:10.8px;background:#f2f2f2;border:1px solid #9a9a9a;border-top-color:#fff;border-left-color:#fff;box-shadow:0 0 0 0.6px #bdbdbd"></div>
<div class="a" style="left:722.6px;top:245.8px;width:8px;height:8px;background:#fff;border:0.9px solid #666"></div>
<div class="t" style="left:735px;top:244.9px;width:74px;text-align:center;font-size:7.6px;color:#111">Default</div>
<div class="a" style="left:722.00px;top:260.90px;width:8.8px;height:8.8px;background:#ffffff;border:0.7px solid #8c8c8c;border-right-color:#e8e8e8;border-bottom-color:#e8e8e8"></div>
<div class="a" style="left:733.70px;top:260.90px;width:8.8px;height:8.8px;background:#ffc0c0;border:0.7px solid #8c8c8c;border-right-color:#e8e8e8;border-bottom-color:#e8e8e8"></div>
<div class="a" style="left:745.40px;top:260.90px;width:8.8px;height:8.8px;background:#ffe0c0;border:0.7px solid #8c8c8c;border-right-color:#e8e8e8;border-bottom-color:#e8e8e8"></div>
<div class="a" style="left:757.10px;top:260.90px;width:8.8px;height:8.8px;background:#ffffc0;border:0.7px solid #8c8c8c;border-right-color:#e8e8e8;border-bottom-color:#e8e8e8"></div>
<div class="a" style="left:768.80px;top:260.90px;width:8.8px;height:8.8px;background:#c0ffc0;border:0.7px solid #8c8c8c;border-right-color:#e8e8e8;border-bottom-color:#e8e8e8"></div>
<div class="a" style="left:780.50px;top:260.90px;width:8.8px;height:8.8px;background:#c0ffff;border:0.7px solid #8c8c8c;border-right-color:#e8e8e8;border-bottom-color:#e8e8e8"></div>
<div class="a" style="left:792.20px;top:260.90px;width:8.8px;height:8.8px;background:#c0c0ff;border:0.7px solid #8c8c8c;border-right-color:#e8e8e8;border-bottom-color:#e8e8e8"></div>
<div class="a" style="left:803.90px;top:260.90px;width:8.8px;height:8.8px;background:#ffc0ff;border:0.7px solid #8c8c8c;border-right-color:#e8e8e8;border-bottom-color:#e8e8e8"></div>
<div class="a" style="left:722.00px;top:272.55px;width:8.8px;height:8.8px;background:#e0e0e0;border:0.7px solid #8c8c8c;border-right-color:#e8e8e8;border-bottom-color:#e8e8e8"></div>
<div class="a" style="left:733.70px;top:272.55px;width:8.8px;height:8.8px;background:#ff8080;border:0.7px solid #8c8c8c;border-right-color:#e8e8e8;border-bottom-color:#e8e8e8"></div>
<div class="a" style="left:745.40px;top:272.55px;width:8.8px;height:8.8px;background:#ffc080;border:0.7px solid #8c8c8c;border-right-color:#e8e8e8;border-bottom-color:#e8e8e8"></div>
<div class="a" style="left:757.10px;top:272.55px;width:8.8px;height:8.8px;background:#ffff80;border:0.7px solid #8c8c8c;border-right-color:#e8e8e8;border-bottom-color:#e8e8e8"></div>
<div class="a" style="left:768.80px;top:272.55px;width:8.8px;height:8.8px;background:#80ff80;border:0.7px solid #8c8c8c;border-right-color:#e8e8e8;border-bottom-color:#e8e8e8"></div>
<div class="a" style="left:780.50px;top:272.55px;width:8.8px;height:8.8px;background:#80ffff;border:0.7px solid #8c8c8c;border-right-color:#e8e8e8;border-bottom-color:#e8e8e8"></div>
<div class="a" style="left:792.20px;top:272.55px;width:8.8px;height:8.8px;background:#8080ff;border:0.7px solid #8c8c8c;border-right-color:#e8e8e8;border-bottom-color:#e8e8e8"></div>
<div class="a" style="left:803.90px;top:272.55px;width:8.8px;height:8.8px;background:#ff80ff;border:0.7px solid #8c8c8c;border-right-color:#e8e8e8;border-bottom-color:#e8e8e8"></div>
<div class="a" style="left:722.00px;top:284.20px;width:8.8px;height:8.8px;background:#c0c0c0;border:0.7px solid #8c8c8c;border-right-color:#e8e8e8;border-bottom-color:#e8e8e8"></div>
<div class="a" style="left:733.70px;top:284.20px;width:8.8px;height:8.8px;background:#ff0000;border:0.7px solid #8c8c8c;border-right-color:#e8e8e8;border-bottom-color:#e8e8e8"></div>
<div class="a" style="left:745.40px;top:284.20px;width:8.8px;height:8.8px;background:#ff8000;border:0.7px solid #8c8c8c;border-right-color:#e8e8e8;border-bottom-color:#e8e8e8"></div>
<div class="a" style="left:757.10px;top:284.20px;width:8.8px;height:8.8px;background:#ffff00;border:0.7px solid #8c8c8c;border-right-color:#e8e8e8;border-bottom-color:#e8e8e8"></div>
<div class="a" style="left:768.80px;top:284.20px;width:8.8px;height:8.8px;background:#00ff00;border:0.7px solid #8c8c8c;border-right-color:#e8e8e8;border-bottom-color:#e8e8e8"></div>
<div class="a" style="left:780.50px;top:284.20px;width:8.8px;height:8.8px;background:#00ffff;border:0.7px solid #8c8c8c;border-right-color:#e8e8e8;border-bottom-color:#e8e8e8"></div>
<div class="a" style="left:792.20px;top:284.20px;width:8.8px;height:8.8px;background:#0000ff;border:0.7px solid #8c8c8c;border-right-color:#e8e8e8;border-bottom-color:#e8e8e8"></div>
<div class="a" style="left:803.90px;top:284.20px;width:8.8px;height:8.8px;background:#ff00ff;border:0.7px solid #8c8c8c;border-right-color:#e8e8e8;border-bottom-color:#e8e8e8"></div>
<div class="a" style="left:722.00px;top:295.85px;width:8.8px;height:8.8px;background:#808080;border:0.7px solid #8c8c8c;border-right-color:#e8e8e8;border-bottom-color:#e8e8e8"></div>
<div class="a" style="left:733.70px;top:295.85px;width:8.8px;height:8.8px;background:#c00000;border:0.7px solid #8c8c8c;border-right-color:#e8e8e8;border-bottom-color:#e8e8e8"></div>
<div class="a" style="left:745.40px;top:295.85px;width:8.8px;height:8.8px;background:#c04000;border:0.7px solid #8c8c8c;border-right-color:#e8e8e8;border-bottom-color:#e8e8e8"></div>
<div class="a" style="left:757.10px;top:295.85px;width:8.8px;height:8.8px;background:#c0c000;border:0.7px solid #8c8c8c;border-right-color:#e8e8e8;border-bottom-color:#e8e8e8"></div>
<div class="a" style="left:768.80px;top:295.85px;width:8.8px;height:8.8px;background:#00c000;border:0.7px solid #8c8c8c;border-right-color:#e8e8e8;border-bottom-color:#e8e8e8"></div>
<div class="a" style="left:780.50px;top:295.85px;width:8.8px;height:8.8px;background:#00c0c0;border:0.7px solid #8c8c8c;border-right-color:#e8e8e8;border-bottom-color:#e8e8e8"></div>
<div class="a" style="left:792.20px;top:295.85px;width:8.8px;height:8.8px;background:#0000c0;border:0.7px solid #8c8c8c;border-right-color:#e8e8e8;border-bottom-color:#e8e8e8"></div>
<div class="a" style="left:803.90px;top:295.85px;width:8.8px;height:8.8px;background:#c000c0;border:0.7px solid #8c8c8c;border-right-color:#e8e8e8;border-bottom-color:#e8e8e8"></div>
<div class="a" style="left:722.00px;top:307.50px;width:8.8px;height:8.8px;background:#404040;border:0.7px solid #8c8c8c;border-right-color:#e8e8e8;border-bottom-color:#e8e8e8"></div>
<div class="a" style="left:733.70px;top:307.50px;width:8.8px;height:8.8px;background:#800000;border:0.7px solid #8c8c8c;border-right-color:#e8e8e8;border-bottom-color:#e8e8e8"></div>
<div class="a" style="left:745.40px;top:307.50px;width:8.8px;height:8.8px;background:#804000;border:0.7px solid #8c8c8c;border-right-color:#e8e8e8;border-bottom-color:#e8e8e8"></div>
<div class="a" style="left:757.10px;top:307.50px;width:8.8px;height:8.8px;background:#808000;border:0.7px solid #8c8c8c;border-right-color:#e8e8e8;border-bottom-color:#e8e8e8"></div>
<div class="a" style="left:768.80px;top:307.50px;width:8.8px;height:8.8px;background:#008000;border:0.7px solid #8c8c8c;border-right-color:#e8e8e8;border-bottom-color:#e8e8e8"></div>
<div class="a" style="left:780.50px;top:307.50px;width:8.8px;height:8.8px;background:#008080;border:0.7px solid #8c8c8c;border-right-color:#e8e8e8;border-bottom-color:#e8e8e8"></div>
<div class="a" style="left:792.20px;top:307.50px;width:8.8px;height:8.8px;background:#000080;border:0.7px solid #8c8c8c;border-right-color:#e8e8e8;border-bottom-color:#e8e8e8"></div>
<div class="a" style="left:803.90px;top:307.50px;width:8.8px;height:8.8px;background:#800080;border:0.7px solid #8c8c8c;border-right-color:#e8e8e8;border-bottom-color:#e8e8e8"></div>
<div class="a" style="left:722.00px;top:319.15px;width:8.8px;height:8.8px;background:#000000;border:0.7px solid #8c8c8c;border-right-color:#e8e8e8;border-bottom-color:#e8e8e8"></div>
<div class="a" style="left:733.70px;top:319.15px;width:8.8px;height:8.8px;background:#400000;border:0.7px solid #8c8c8c;border-right-color:#e8e8e8;border-bottom-color:#e8e8e8"></div>
<div class="a" style="left:745.40px;top:319.15px;width:8.8px;height:8.8px;background:#804040;border:0.7px solid #8c8c8c;border-right-color:#e8e8e8;border-bottom-color:#e8e8e8"></div>
<div class="a" style="left:757.10px;top:319.15px;width:8.8px;height:8.8px;background:#404000;border:0.7px solid #8c8c8c;border-right-color:#e8e8e8;border-bottom-color:#e8e8e8"></div>
<div class="a" style="left:768.80px;top:319.15px;width:8.8px;height:8.8px;background:#004000;border:0.7px solid #8c8c8c;border-right-color:#e8e8e8;border-bottom-color:#e8e8e8"></div>
<div class="a" style="left:780.50px;top:319.15px;width:8.8px;height:8.8px;background:#004040;border:0.7px solid #8c8c8c;border-right-color:#e8e8e8;border-bottom-color:#e8e8e8"></div>
<div class="a" style="left:792.20px;top:319.15px;width:8.8px;height:8.8px;background:#000040;border:0.7px solid #8c8c8c;border-right-color:#e8e8e8;border-bottom-color:#e8e8e8"></div>
<div class="a" style="left:803.90px;top:319.15px;width:8.8px;height:8.8px;background:#400040;border:0.7px solid #8c8c8c;border-right-color:#e8e8e8;border-bottom-color:#e8e8e8"></div>
<div class="a" style="left:722.00px;top:333.50px;width:8.8px;height:8.8px;background:#ffffff;border:0.7px solid #8c8c8c;border-right-color:#e8e8e8;border-bottom-color:#e8e8e8"></div>
<div class="a" style="left:733.70px;top:333.50px;width:8.8px;height:8.8px;background:#ffffff;border:0.7px solid #8c8c8c;border-right-color:#e8e8e8;border-bottom-color:#e8e8e8"></div>
<div class="a" style="left:745.40px;top:333.50px;width:8.8px;height:8.8px;background:#ffffff;border:0.7px solid #8c8c8c;border-right-color:#e8e8e8;border-bottom-color:#e8e8e8"></div>
<div class="a" style="left:757.10px;top:333.50px;width:8.8px;height:8.8px;background:#ffffff;border:0.7px solid #8c8c8c;border-right-color:#e8e8e8;border-bottom-color:#e8e8e8"></div>
<div class="a" style="left:768.80px;top:333.50px;width:8.8px;height:8.8px;background:#ffffff;border:0.7px solid #8c8c8c;border-right-color:#e8e8e8;border-bottom-color:#e8e8e8"></div>
<div class="a" style="left:780.50px;top:333.50px;width:8.8px;height:8.8px;background:#ffffff;border:0.7px solid #8c8c8c;border-right-color:#e8e8e8;border-bottom-color:#e8e8e8"></div>
<div class="a" style="left:792.20px;top:333.50px;width:8.8px;height:8.8px;background:#ffffff;border:0.7px solid #8c8c8c;border-right-color:#e8e8e8;border-bottom-color:#e8e8e8"></div>
<div class="a" style="left:803.90px;top:333.50px;width:8.8px;height:8.8px;background:#ffffff;border:0.7px solid #8c8c8c;border-right-color:#e8e8e8;border-bottom-color:#e8e8e8"></div>
<div class="a" style="left:720px;top:343.6px;width:93.5px;height:1px;background:#b5b5b5"></div>
<div class="t" style="left:722px;top:349px;width:40px;text-align:center;font-size:7.6px;color:#111">Normal</div>
<div class="t" style="left:771.6px;top:349px;width:40px;text-align:center;font-size:7.6px;color:#111">System</div>
<div class="t" style="left:737px;top:364.2px;width:60px;text-align:center;font-size:7.6px;color:#111">More Colors...</div>
<div class="t" style="left:732px;top:378.6px;width:70px;text-align:center;font-size:7.6px;color:#111">Screen Capture...</div>
<div class="a" style="left:806.4px;top:377px;width:7px;height:11.4px;border-left:1.2px solid #777;border-top:1.2px solid #777;border-right:1px solid #fff;border-bottom:1px solid #fff"></div>
<div class="a" style="left:701.3px;top:301.3px;width:47.4px;height:47.4px;border-radius:50%;overflow:hidden;background:#275de9"><div class="a" style="left:0;top:16.3px;width:60px;height:1px;background:#1c4dd4"></div><div class="a" style="left:0;top:27.1px;width:60px;height:1px;background:#1c4dd4"></div><div class="a" style="left:0;top:37.9px;width:60px;height:1px;background:#1c4dd4"></div><div class="a" style="left:0;top:42.8px;width:60px;height:1px;background:#1c4dd4"></div><div class="pl" style="left:-42.3px;top:7.94px;color:#4a7af6">Format</div><div class="pl" style="left:-42.3px;top:18.12px;color:#4a7af6">Configuration</div><div class="pl" style="left:-42.3px;top:28.30px;color:#4a7af6">Limits</div><div class="a" style="left:21.40px;top:6.90px;width:7.4px;height:7.4px;background:#0b5243"></div><div class="a" style="left:33.10px;top:6.90px;width:7.4px;height:7.4px;background:#050505"></div><div class="a" style="left:21.40px;top:18.55px;width:7.4px;height:7.4px;background:#050505"></div><div class="a" style="left:33.10px;top:18.55px;width:7.4px;height:7.4px;background:#050505"></div><div class="a" style="left:21.40px;top:32.90px;width:7.4px;height:7.4px;background:#2b2fb4"></div><div class="a" style="left:21.40px;top:-4.75px;width:7.4px;height:7.4px;background:#1b2c98"></div><div class="a" style="left:33.10px;top:-4.75px;width:7.4px;height:7.4px;background:#3a0a30"></div><div class="a" style="left:32.60px;top:32.40px;width:8.4px;height:8.4px;border:0.8px solid #1d49c8"></div></div>
<svg class="a" style="left:724.4px;top:326.4px" width="10" height="14" viewBox="0 0 10 14"><path d="M1 0.8V10.6L3.4 8.4L5.2 12.4L6.8 11.7L5 7.8H8.2Z" fill="#fff" stroke="#8fa8e8" stroke-width="0.5"/></svg>
<div class="a" style="left:918px;top:59px;width:12px;height:470px;background:#f4f6fa"></div>
</body></html>
